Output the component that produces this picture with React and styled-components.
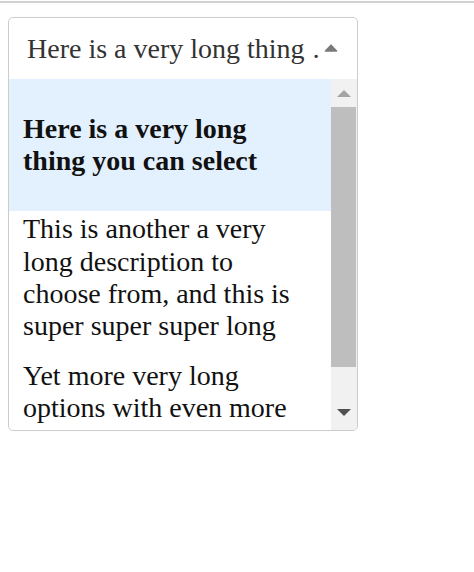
import React from "react";
import styled, { createGlobalStyle } from "styled-components";

const GlobalStyle = createGlobalStyle`
  html, body {
    margin: 0;
    padding: 0;
    background: #fff;
    font-family: "Liberation Serif", "Times New Roman", serif;
  }
`;

const TopRule = styled.div`
  height: 2px;
  margin-top: 1px;
  background: #d2d2d2;
`;

const Select = styled.div`
  width: 348px;
  margin: 14px 0 0 8px;
  border: 1px solid #cccccc;
  border-radius: 5px;
  overflow: hidden;
  background: #fff;
`;

const Header = styled.div`
  position: relative;
  height: 61px;
  display: flex;
  align-items: center;
  padding: 0 12px 0 18px;
  color: #333;
  font-size: 28px;
`;

const Value = styled.span`
  flex: 1;
  min-width: 0;
  white-space: nowrap;
  overflow: hidden;
  text-overflow: ellipsis;
`;

/* caret sits over the end of the ellipsis, like the original */
const Caret = styled.span`
  position: absolute;
  right: 14px;
  top: 18px;
  width: 25px;
  height: 26px;
  box-sizing: border-box;
  padding-top: 8px;
  display: flex;
  align-items: flex-start;
  justify-content: center;
  background: linear-gradient(to right, rgba(255, 255, 255, 0.8), #fff 3px);
  margin-left: -4px;
`;

const Menu = styled.div`
  display: flex;
  height: 351px;
`;

const List = styled.div`
  flex: 1;
  overflow: hidden;
`;

const Option = styled.div`
  padding: ${(p) => (p.$selected ? "34px 28px 34px 14px" : "2px 28px 16px 14px")};
  background: ${(p) => (p.$selected ? "#e3f0fd" : "transparent")};
  font-weight: ${(p) => (p.$selected ? 700 : 400)};
  color: #111;
  font-size: 28px;
  line-height: 1.15;
`;

const Scrollbar = styled.div`
  width: 26px;
  display: flex;
  flex-direction: column;
  background: #f1f1f1;
`;

const ScrollButton = styled.div`
  height: ${(p) => p.$h}px;
  display: flex;
  align-items: ${(p) => (p.$down ? "flex-end" : "center")};
  padding-bottom: ${(p) => (p.$down ? "14px" : "0")};
  box-sizing: border-box;
  justify-content: center;
`;

const Thumb = styled.div`
  height: 260px;
  margin-right: 1px;
  background: #bebebe;
`;

const Spacer = styled.div`
  flex: 1;
`;

const Triangle = ({ up, color }) => (
  <svg width="14" height="7" viewBox="0 0 14 7">
    <path d={up ? "M0 7 L7 0 L14 7 Z" : "M0 0 L7 7 L14 0 Z"} fill={color} />
  </svg>
);

export default function App() {
  return (
    <>
      <GlobalStyle />
      <TopRule />
      <Select>
        <Header>
          <Value>Here is a very long thing you can select</Value>
          <Caret>
            <svg width="14" height="8" viewBox="0 0 14 8">
              <path
                d="M1.5 7 L7 1.2 L12.5 7 Z"
                fill="#7a7a7a"
                stroke="#7a7a7a"
                strokeWidth="1.6"
                strokeLinejoin="round"
              />
            </svg>
          </Caret>
        </Header>
        <Menu>
          <List>
            <Option $selected>Here is a very long thing you can select</Option>
            <Option>
              This is another a very long description to choose from, and this
              is super super super long
            </Option>
            <Option>
              Yet more very long options with even more thoughts
            </Option>
          </List>
          <Scrollbar>
            <ScrollButton $h={28}>
              <Triangle up color="#a3a3a3" />
            </ScrollButton>
            <Thumb />
            <Spacer />
            <ScrollButton $h={40} $down>
              <Triangle color="#505050" />
            </ScrollButton>
          </Scrollbar>
        </Menu>
      </Select>
    </>
  );
}
